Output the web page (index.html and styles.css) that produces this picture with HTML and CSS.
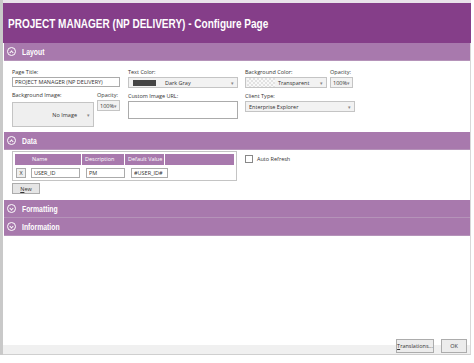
FILE: index.html
```html
<!DOCTYPE html>
<html lang="en">
<head>
    <meta charset="UTF-8">
    <title>Configure Page</title>
    <link rel="stylesheet" href="styles.css">
</head>
<body>
    <div class="window">
        <!-- Title -->
        <div class="title-bar"><span class="narrow">PROJECT MANAGER (NP DELIVERY) - Configure Page</span></div>

        <div class="content">
            <!-- Layout -->
            <div class="section-head"><span class="toggle open"></span><span class="narrow">Layout</span></div>
            <div class="section-body layout">
                <div class="col col-a">
                    <div class="field">
                        <label>Page Title:</label>
                        <input type="text" class="text wide" value="PROJECT MANAGER (NP DELIVERY)">
                    </div>
                    <div class="row">
                        <div class="field">
                            <label class="img-label">Background Image:</label>
                            <div class="image-box">No Image<span class="arrow">&#9662;</span></div>
                        </div>
                        <div class="field">
                            <label>Opacity:</label>
                            <div class="select small">100%<span class="arrow">&#9662;</span></div>
                        </div>
                    </div>
                </div>
                <div class="col col-b">
                    <div class="field">
                        <label>Text Color:</label>
                        <div class="select color"><span class="swatch"></span><span class="grow">Dark Gray</span><span class="arrow">&#9662;</span></div>
                    </div>
                    <div class="field">
                        <label>Custom Image URL:</label>
                        <div class="url-box"></div>
                    </div>
                </div>
                <div class="col col-c">
                    <div class="row">
                        <div class="field">
                            <label>Background Color:</label>
                            <div class="select bgcolor"><span class="checker"></span><span class="grow">Transparent</span><span class="arrow">&#9662;</span></div>
                        </div>
                        <div class="field">
                            <label>Opacity:</label>
                            <div class="select small">100%<span class="arrow">&#9662;</span></div>
                        </div>
                    </div>
                    <div class="field">
                        <label>Client Type:</label>
                        <div class="select client"><span class="grow">Enterprise Explorer</span><span class="arrow">&#9662;</span></div>
                    </div>
                </div>
            </div>

            <!-- Data -->
            <div class="section-head"><span class="toggle open"></span><span class="narrow">Data</span></div>
            <div class="section-body data">
                <div>
                    <div class="grid">
                        <div class="grid-head">
                            <span class="c0"></span>
                            <span class="c1">Name</span>
                            <span class="c2">Description</span>
                            <span class="c3">Default Value</span>
                        </div>
                        <div class="grid-row">
                            <span class="c0"><span class="del">X</span></span>
                            <span class="c1"><input type="text" class="text" value="USER_ID"></span>
                            <span class="c2"><input type="text" class="text" value="PM"></span>
                            <span class="c3"><input type="text" class="text" value="#USER_ID#"></span>
                        </div>
                    </div>
                    <button class="btn new"><u>N</u>ew</button>
                </div>
                <label class="check"><span class="box"></span>Auto Refresh</label>
            </div>

            <!-- Collapsed -->
            <div class="section-head"><span class="toggle"></span><span class="narrow">Formatting</span></div>
            <div class="section-head"><span class="toggle"></span><span class="narrow">Information</span></div>
            <div class="spacer"></div>
        </div>

        <!-- Footer -->
        <div class="footer">
            <button class="btn"><u>T</u>ranslations...</button>
            <button class="btn ok">OK</button>
        </div>
    </div>
</body>
</html>
```

FILE: styles.css
```css
body {
    margin: 0;
    background-color: #fff;
    font-family: "Open Sans", "Noto Sans", sans-serif;
    font-size: 5.5px;
    color: #333;
}
.window {
    width: 471px;
    height: 355px;
    display: flex;
    flex-direction: column;
    background-color: #e9e2ea;
    border-left: 3px solid #c9c9c9;
    box-sizing: border-box;
    padding-top: 3px;
}
.narrow {
    display: inline-block;
    transform-origin: left center;
    white-space: nowrap;
}
.title-bar {
    height: 40px;
    background-color: #853e89;
    color: #fff;
    font-family: "Liberation Sans", Arial, sans-serif;
    font-weight: bold;
    font-size: 13px;
    display: flex;
    align-items: center;
    padding-left: 5px;
}
.title-bar .narrow {
    transform: scaleX(0.77);
}
.content {
    flex: 1;
    display: flex;
    flex-direction: column;
    background-color: #fff;
    border-right: 1px solid #d8d8d8;
    padding-left: 1px;
}
.section-head {
    height: 17px;
    background-color: #a879ad;
    border-bottom: 1px solid #b593b9;
    color: #fff;
    font-family: "Liberation Sans", Arial, sans-serif;
    font-weight: bold;
    font-size: 9.5px;
    display: flex;
    align-items: center;
    padding-left: 3px;
}
.section-head .narrow {
    transform: scaleX(0.72);
}
.toggle {
    width: 7px;
    height: 7px;
    border: 1px solid #fff;
    border-radius: 50%;
    margin-right: 6px;
    position: relative;
}
.toggle::after {
    content: "";
    position: absolute;
    left: 2px;
    top: 1.5px;
    width: 2px;
    height: 2px;
    border-left: 1px solid #fff;
    border-bottom: 1px solid #fff;
    transform: rotate(-45deg);
}
.toggle.open::after {
    top: 2.5px;
    transform: rotate(135deg);
}
.section-body {
    display: flex;
    padding: 8px 8px 4px 8px;
}
.layout {
    height: 55px;
    margin-bottom: 4px;
}
.col {
    display: flex;
    flex-direction: column;
    gap: 5px;
}
.col-a { width: 108px; margin-right: 8px; }
.col-b { width: 110px; margin-right: 7px; }
.col-c { width: 110px; }
.row {
    display: flex;
    gap: 3px;
}
.field label {
    display: block;
    margin-bottom: 1px;
    line-height: 7px;
}
.field .img-label {
    margin-bottom: 3px;
}
.text {
    box-sizing: border-box;
    height: 10px;
    border: 1px solid #ababab;
    font-family: inherit;
    font-size: 5.5px;
    color: #333;
    padding: 0 2px;
    margin: 0;
}
.wide { width: 108px; }
.select {
    box-sizing: border-box;
    height: 11px;
    border: 1px solid #c4c4c4;
    background-color: #f2f2f2;
    display: flex;
    align-items: center;
    padding: 0 3px;
}
.grow { flex: 1; }
.arrow {
    font-size: 5px;
    color: #888;
}
.select.small {
    width: 23px;
    justify-content: space-between;
    padding: 0 2px;
}
.select.color { width: 110px; padding-left: 4px; }
.swatch {
    width: 23px;
    height: 6px;
    background-color: #454545;
    margin-right: 9px;
}
.select.bgcolor { width: 82px; padding-left: 1px; }
.checker {
    width: 28px;
    height: 9px;
    margin-right: 3px;
    background-color: #f8f8f8;
    background-image: linear-gradient(45deg, #e2e2e2 25%, transparent 25%, transparent 75%, #e2e2e2 75%),
        linear-gradient(45deg, #e2e2e2 25%, transparent 25%, transparent 75%, #e2e2e2 75%);
    background-size: 4px 4px;
    background-position: 0 0, 2px 2px;
}
.select.client { width: 110px; }
.image-box {
    box-sizing: border-box;
    width: 82px;
    height: 25px;
    border: 1px solid #c4c4c4;
    background-color: #efefef;
    display: flex;
    align-items: center;
    justify-content: flex-end;
    padding-right: 3px;
    gap: 10px;
}
.url-box {
    box-sizing: border-box;
    width: 110px;
    height: 18px;
    border: 1px solid #ababab;
}
.data {
    height: 45px;
    padding-top: 1px;
    gap: 8px;
}
.grid {
    width: 219px;
    border: 1px solid #c4c4c4;
    padding: 2px;
    margin-bottom: 2px;
}
.grid-head, .grid-row {
    display: flex;
}
.grid-head {
    background-color: #a879ad;
    color: #fff;
    height: 11px;
    align-items: center;
    margin-bottom: 2px;
}
.grid-head span {
    border-right: 1px solid #fff;
    box-sizing: border-box;
    padding-left: 3px;
    line-height: 11px;
}
.grid-row { height: 11px; align-items: center; }
.c0 { width: 14px; }
.c1 { width: 53px; }
.c2 { width: 43px; }
.c3 { width: 40px; }
.grid-row .c1, .grid-row .c2, .grid-row .c3 { padding-left: 2px; }
.grid-row .c1 .text { width: 49px; }
.grid-row .c2 .text { width: 39px; }
.grid-row .c3 .text { width: 37px; }
.del {
    display: inline-block;
    box-sizing: border-box;
    width: 10px;
    height: 10px;
    border: 1px solid #aaa;
    background-color: #efefef;
    text-align: center;
    line-height: 8px;
    margin-left: 1px;
}
.btn {
    box-sizing: border-box;
    border: 1px solid #acacac;
    background-color: #e5e5e5;
    font-family: inherit;
    font-size: 5.5px;
    color: #333;
    padding: 0;
    height: 11px;
}
.btn.new { width: 28px; }
.check {
    display: flex;
    align-items: center;
    height: 10px;
    margin-top: 3px;
}
.box {
    width: 6px;
    height: 6px;
    border: 1px solid #888;
    margin-right: 4px;
    background-color: #fff;
}
.spacer { flex: 1; }
.footer {
    height: 17px;
    background: linear-gradient(#fff 7px, #f0f0f0 7px);
    border-bottom: 1px solid #cfcfcf;
    border-right: 1px solid #d8d8d8;
    display: flex;
    justify-content: flex-end;
    align-items: flex-start;
    gap: 7px;
    padding-right: 3px;
    padding-top: 1px;
    box-sizing: border-box;
}
.footer .btn {
    height: 14px;
    width: 38px;
    background-color: #ececec;
}
.footer .btn.ok { width: 26px; }
```
